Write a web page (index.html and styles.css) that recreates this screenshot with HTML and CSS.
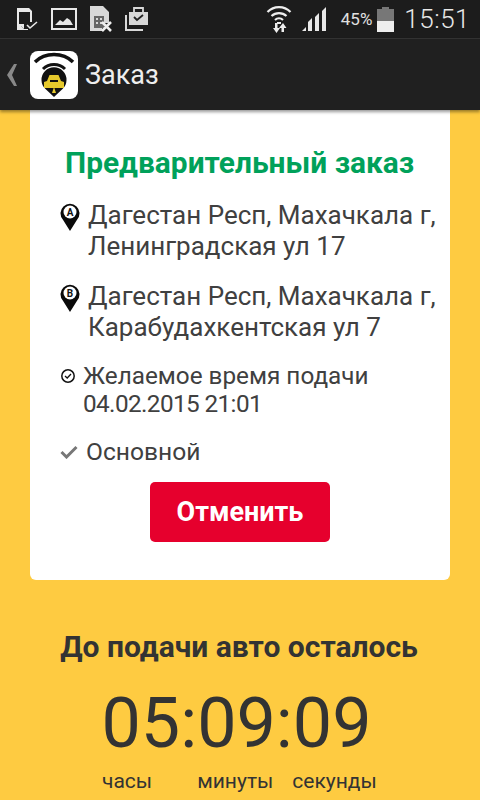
FILE: index.html
```html
<!DOCTYPE html>
<html>
<head>
  <title>Заказ</title>
  <link rel="stylesheet" href="styles.css">
</head>
<body>
  <div class="status-bar">
    <div class="status-left">
      <svg class="st-icon" width="21" height="24" viewBox="0 0 21 24"><path fill-rule="evenodd" d="M0 1h12l3 3v11h-2V5H2v12h3l-1 2 3 3h4v1H0z" fill="#e8e8e8"/><path d="M2 17h5v5z" fill="#e8e8e8"/><path d="M10 18l3 3 7-6" fill="none" stroke="#e8e8e8" stroke-width="1.600"/></svg>
      <svg class="st-icon" width="26" height="22" viewBox="0 0 26 22"><path fill-rule="evenodd" d="M0 0h26v22H0zM2 2v18h22V2z" fill="#e8e8e8"/><path d="M4 17l5-5 3 2 4-4 3 2 3 5z" fill="#e8e8e8"/></svg>
      <svg class="st-icon" width="22" height="26" viewBox="0 0 22 26"><path d="M0 0h13l6 6v11h-7v8H0z" fill="#d8d8d8"/><path d="M4 10h10v12H4z" fill="#666"/><path d="M6 12h2v2H6zM10 12h2v2h-2zM6 16h2v2H6zM10 16h2v2h-2z" fill="#d8d8d8"/><path d="M12 16l9 9M21 16l-9 9" stroke="#eee" stroke-width="2.600"/></svg>
      <svg class="st-icon" width="23" height="24" viewBox="0 0 23 24"><path d="M0 8v16h18v-2H2V8z" fill="#d8d8d8"/><path d="M4 5h19v13H4z" fill="#d8d8d8"/><path d="M9 5V1h9v4" fill="none" stroke="#d8d8d8" stroke-width="1.800"/><path d="M9 10l3 3 6-5" fill="none" stroke="#222" stroke-width="1.800"/></svg>
    </div>
    <div class="status-right">
      <svg class="wifi" width="26" height="28" viewBox="0 0 26 28"><g fill="none" stroke="#eee" stroke-width="2.200"><path d="M1.500 7a16 16 0 0 1 23 0"/><path d="M5.500 11a11 11 0 0 1 15 0"/><path d="M9 15a6 6 0 0 1 8 0"/></g><path d="M11 17h4v2h-4z" fill="#eee"/><path d="M9 18h2.500v5H14l-3.500 5L7 23h2z" fill="#eee"/><path d="M17 18l3.500 5H18v4h-2.500v-4H13z" fill="#eee"/></svg>
      <svg class="signal" width="25" height="26" viewBox="0 0 25 26"><path d="M0 25l4-4v4zM6 25v-9l4-4v13zM13 25V11l4-4v18zM20 25V5l4-4v24z" fill="#e8e8e8"/></svg>
      <span class="battery-text">45%</span>
      <div class="battery"><div class="battery-cap"></div><div class="battery-empty"></div><div class="battery-full"></div></div>
      <span class="clock">15:51</span>
    </div>
  </div>

  <div class="action-bar">
    <svg class="back" width="10" height="22" viewBox="0 0 10 22"><path d="M7 0L0 11l7 11h3L5 11l5-11z" fill="#888"/></svg>
    <div class="app-logo">
      <svg width="48" height="48" viewBox="0 0 48 48">
        <g fill="none" stroke="#111"><path d="M5 11C15 1 33 1 43 11" stroke-width="3.500"/><path d="M13 18C19 12 29 12 35 18" stroke-width="3"/></g>
        <path d="M24 46L15.500 38A12.500 12.500 0 1 1 32.500 38z" fill="#111"/>
        <path d="M17 30l2.500-6h9l2.500 6 3 1v6H14v-6z" fill="#e6c92c"/>
        <path d="M20 30h8" stroke="#111" stroke-width="2"/>
        <path d="M24 36l2 6h-4z" fill="#e6c92c"/>
      </svg>
    </div>
    <span class="action-title">Заказ</span>
  </div>

  <div class="content">
    <div class="card">
      <h1 class="card-title">Предварительный заказ</h1>

      <div class="address">
        <svg class="pin" width="20" height="30" viewBox="0 0 20 30"><path d="M10 29L2.800 17.500A9.500 9.500 0 1 1 17.200 17.500z" fill="#0a0a0a"/><circle cx="10" cy="10" r="6.500" fill="#fff"/><text x="10" y="13.500" class="pin-letter">A</text></svg>
        <div class="address-text">Дагестан Респ, Махачкала г, Ленинградская ул 17</div>
      </div>

      <div class="address">
        <svg class="pin" width="20" height="30" viewBox="0 0 20 30"><path d="M10 29L2.800 17.500A9.500 9.500 0 1 1 17.200 17.500z" fill="#0a0a0a"/><circle cx="10" cy="10" r="6.500" fill="#fff"/><text x="10" y="13.500" class="pin-letter">B</text></svg>
        <div class="address-text">Дагестан Респ, Махачкала г, Карабудахкентская ул 7</div>
      </div>

      <div class="time-row">
        <svg class="clock-icon" width="16" height="16" viewBox="0 0 16 16"><circle cx="8" cy="8" r="6.200" fill="none" stroke="#111" stroke-width="1.500"/><path d="M5 8l2.200 2L11 6" fill="none" stroke="#111" stroke-width="1.300"/></svg>
        <div class="time-text">Желаемое время подачи<br><span class="time-value">04.02.2015 21:01</span></div>
      </div>

      <div class="tariff-row">
        <svg class="check" width="18" height="14" viewBox="0 0 18 14"><path d="M1.500 7l5 5L16.500 2" fill="none" stroke="#777" stroke-width="3"/></svg>
        <span class="tariff">Основной</span>
      </div>

      <button class="cancel-button">Отменить</button>
    </div>

    <h2 class="timer-title">До подачи авто осталось</h2>
    <div class="timer">05:09:09</div>
    <div class="timer-labels">
      <span class="label-hours">часы</span>
      <span class="label-minutes">минуты</span>
      <span>секунды</span>
    </div>
  </div>
</body>
</html>
```

FILE: styles.css
```css
html, body {
  height: 100%;
}
body {
  display: flex;
  flex-direction: column;
  height: 800px;
  margin: 0;
  overflow: hidden;
  background-color: #fecb41;
  font-family: Roboto, "Liberation Sans", sans-serif;
}
.status-bar {
  display: flex;
  justify-content: space-between;
  align-items: center;
  height: 38px;
  flex-shrink: 0;
  padding: 0 10px 0 17px;
  background-color: #1c1c1c;
  border-bottom: 1px solid #333;
}
.status-left {
  display: flex;
  align-items: center;
  gap: 13px;
}
.status-right {
  display: flex;
  align-items: center;
}
.wifi {
  margin-right: 10px;
}
.signal {
  margin-right: 14px;
}
.battery-text {
  margin-right: 5px;
  font-size: 17px;
  color: #e0e0e0;
}
.battery {
  display: flex;
  flex-direction: column;
  align-items: center;
  width: 17px;
  height: 25px;
  margin-right: 10px;
}
.battery-cap {
  width: 7px;
  height: 2px;
  background-color: #777;
}
.battery-empty {
  width: 17px;
  height: 12px;
  background-color: #777;
}
.battery-full {
  width: 17px;
  height: 11px;
  background-color: #eee;
}
.clock {
  font-size: 26px;
  font-weight: 300;
  color: #e8e8e8;
  letter-spacing: 0.5px;
}
.action-bar {
  display: flex;
  align-items: center;
  height: 71px;
  flex-shrink: 0;
  background-color: #202020;
  box-shadow: 0 2px 3px rgba(0,0,0,0.4);
  position: relative;
}
.back {
  margin-left: 7px;
  margin-right: 13px;
}
.app-logo {
  display: flex;
  width: 48px;
  height: 48px;
  margin-right: 7px;
  background-color: #fff;
  border-radius: 8px;
}
.action-title {
  font-size: 27px;
  color: #eee;
}
.content {
  display: flex;
  flex-direction: column;
  flex-grow: 1;
  padding: 0 30px;
}
.card {
  display: flex;
  flex-direction: column;
  height: 470px;
  box-sizing: border-box;
  padding: 35px 10px 0 30px;
  background-color: #fff;
  border-radius: 0 0 6px 6px;
}
.card-title {
  margin: 0 0 19px 5px;
  font-size: 29.900px;
  font-weight: 700;
  line-height: 36px;
  color: #00a15a;
  white-space: nowrap;
}
.address {
  display: flex;
  align-items: flex-start;
  margin-bottom: 19px;
}
.pin {
  flex-shrink: 0;
  margin-top: 2px;
  margin-right: 8px;
}
.pin-letter {
  font-size: 10px;
  font-weight: 700;
  text-anchor: middle;
  fill: #111;
}
.address-text {
  font-size: 26px;
  line-height: 31px;
  color: #404040;
}
.time-row {
  display: flex;
  align-items: flex-start;
  margin-bottom: 20px;
}
.clock-icon {
  flex-shrink: 0;
  margin-top: 6px;
  margin-right: 7px;
}
.time-text {
  font-size: 24.300px;
  line-height: 28px;
  color: #404040;
}
.time-value {
  letter-spacing: -0.600px;
}
.tariff-row {
  display: flex;
  align-items: center;
}
.check {
  margin-right: 8px;
}
.tariff {
  font-size: 24.600px;
  line-height: 28px;
  color: #404040;
}
.cancel-button {
  align-self: center;
  width: 180px;
  height: 60px;
  margin: 16px 0 0 -20px;
  border: none;
  border-radius: 5px;
  background-color: #e6002d;
  font-family: inherit;
  font-size: 27px;
  font-weight: 700;
  color: #fff;
}
.timer-title {
  margin: 49px 2px 0 0;
  font-size: 30px;
  font-weight: 700;
  line-height: 36px;
  color: #333;
  text-align: center;
  white-space: nowrap;
}
.timer {
  margin: 16px 7px 0 0;
  font-size: 70px;
  font-weight: 400;
  line-height: 84px;
  color: #333;
  text-align: center;
}
.timer-labels {
  display: flex;
  margin-top: 4px;
  padding-left: 72px;
  font-size: 21px;
  color: #333;
}
.label-hours {
  margin-right: 45px;
}
.label-minutes {
  margin-right: 19px;
}
```
